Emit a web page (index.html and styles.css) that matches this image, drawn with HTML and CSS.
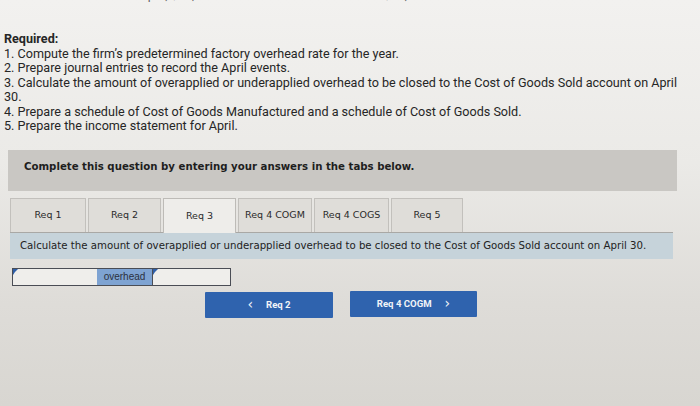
FILE: index.html
```html
<!DOCTYPE html>
<html lang="en">
<head>
<meta charset="utf-8">
<title>Required</title>
<link rel="stylesheet" href="styles.css">
</head>
<body>
<div class="page">
  <p class="cut-line">had sales on account in April, $78,000. The Cost of Goods Sold was $52,710.</p>

  <div class="required">
    <p class="req-title">Required:</p>
    <p>1. Compute the firm’s predetermined factory overhead rate for the year.</p>
    <p>2. Prepare journal entries to record the April events.</p>
    <p>3. Calculate the amount of overapplied or underapplied overhead to be closed to the Cost of Goods Sold account on April<br>30.</p>
    <p>4. Prepare a schedule of Cost of Goods Manufactured and a schedule of Cost of Goods Sold.</p>
    <p>5. Prepare the income statement for April.</p>
  </div>

  <div class="complete-box">Complete this question by entering your answers in the tabs below.</div>

  <div class="tabs">
    <div class="tab t1">Req 1</div>
    <div class="tab t2">Req 2</div>
    <div class="tab t3 active">Req 3</div>
    <div class="tab t4">Req 4 COGM</div>
    <div class="tab t5">Req 4 COGS</div>
    <div class="tab t6">Req 5</div>
  </div>
  <div class="instruction">Calculate the amount of overapplied or underapplied overhead to be closed to the Cost of Goods Sold account on April 30.</div>

  <div class="answer-row">
    <div class="cell input c1"><span class="marker"></span></div>
    <div class="cell label">overhead</div>
    <div class="cell input c3"><span class="marker"></span></div>
  </div>

  <div class="nav">
    <div class="btn prev"><span class="chev">‹</span>Req 2</div>
    <div class="btn next">Req 4 COGM<span class="chev">›</span></div>
  </div>
</div>
</body>
</html>
```

FILE: styles.css
```css
html, body {
  margin: 0;
  padding: 0;
}
body {
  width: 700px;
  height: 406px;
  overflow: hidden;
  background: linear-gradient(180deg, #f2f1ef 0%, #ebeae7 40%, #dedcd8 75%, #d8d6d1 100%);
  color: #1f1f1f;
}
.page {
  display: flex;
  flex-direction: column;
}
p { margin: 0; }

.cut-line {
  margin: -12px 0 0 4px;
  height: 15px;
  font: 12.6px/13px Roboto, "Liberation Sans", sans-serif;
  color: #666;
  white-space: nowrap;
}

.required {
  margin: 29px 0 0 4px;
  font: 12.6px/14.5px Roboto, "Liberation Sans", sans-serif;
  color: #262626;
  white-space: nowrap;
}
.req-title {
  font-weight: 700;
}

.complete-box {
  margin: 16px 0 0 8px;
  width: 669px;
  height: 41px;
  box-sizing: border-box;
  padding: 10px 0 0 16px;
  background: #c9c7c3;
  font: 700 10.2px/14px "DejaVu Sans", Verdana, sans-serif;
  color: #1e1e1e;
}

.tabs {
  margin: 7px 0 0 10px;
  width: 663px;
  display: flex;
  gap: 2px;
  border-bottom: 1px solid #a9a8a5;
}
.tab {
  height: 34px;
  box-sizing: border-box;
  border: 1px solid #c2c0bc;
  border-bottom: none;
  background: #dfddd9;
  display: flex;
  align-items: center;
  justify-content: center;
  font: 9.5px/1 "DejaVu Sans", Verdana, sans-serif;
  color: #2a2a2a;
}
.t1 { width: 76px; }
.t2 { width: 73px; }
.t3 { width: 73px; }
.t4 { width: 74px; }
.t5 { width: 75px; }
.t6 { width: 72px; }
.tab.active {
  background: #eeedea;
  height: 35px;
  margin-bottom: -1px;
  border-color: #bdbbb7;
}

.instruction {
  margin: 0 0 0 10px;
  width: 663px;
  height: 26px;
  box-sizing: border-box;
  padding: 7px 0 0 10px;
  background: #c6d3da;
  font: 10.2px/12px "DejaVu Sans", Verdana, sans-serif;
  color: #222;
  white-space: nowrap;
}

.answer-row {
  margin: 9px 0 0 12px;
  width: 219px;
  height: 18px;
  box-sizing: border-box;
  border: 1px solid #4a4d55;
  display: flex;
}
.cell {
  position: relative;
  height: 100%;
  box-sizing: border-box;
}
.input {
  background: #efeeeb;
}
.c1 { width: 84px; }
.c3 { flex: 1; border-left: 1px solid #4a4d55; }
.label {
  width: 55px;
  background: #7ea3d2;
  font: 10px/16px "Liberation Sans", Arial, sans-serif;
  color: #2b3140;
  text-align: center;
}
.marker {
  position: absolute;
  left: 0;
  top: 0;
  width: 0;
  height: 0;
  border-top: 3px solid #2f5fa8;
  border-right: 3px solid transparent;
  border-bottom: 3px solid transparent;
  border-left: 2px solid #2f5fa8;
}

.nav {
  margin: 6px 0 0 205px;
  display: flex;
  gap: 17px;
}
.btn {
  height: 26px;
  background: #2f63ae;
  border-radius: 1px;
  color: #f2f4f8;
  font: 700 9.6px/26px Roboto, "Liberation Sans", Arial, sans-serif;
  display: flex;
  align-items: center;
  justify-content: center;
}
.prev { width: 128px; }
.next { width: 127px; margin-top: -1px; }
.chev {
  font: 400 14px/1 "DejaVu Sans", sans-serif;
  position: relative;
  top: -1px;
}
.prev .chev { margin-right: 13px; }
.next .chev { margin-left: 13px; }
```
